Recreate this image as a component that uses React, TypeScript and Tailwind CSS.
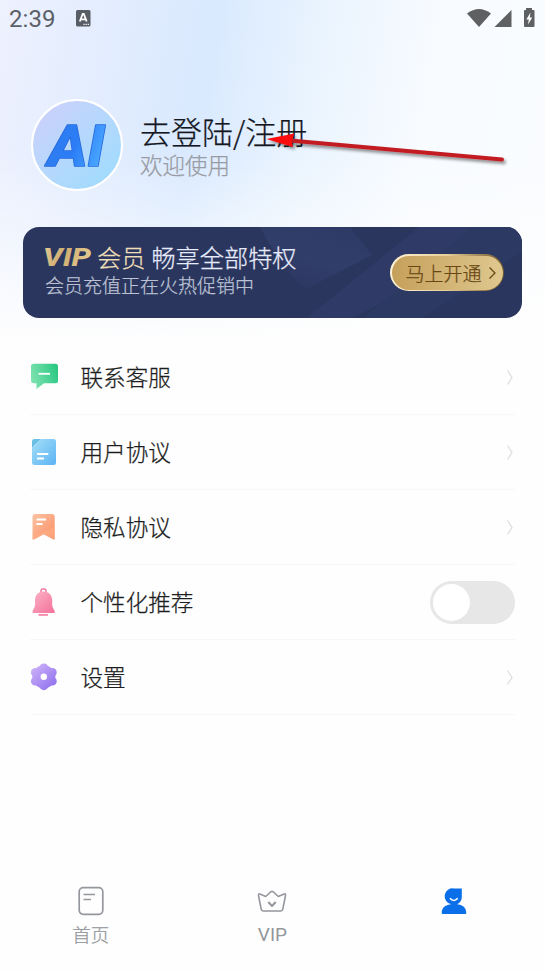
import type { ReactNode } from "react";

interface MenuItem {
  label: string;
  icon: ReactNode;
  toggle?: boolean;
}

const ChatIcon = () => (
  <svg width="30" height="30" viewBox="0 0 30 30">
    <defs>
      <linearGradient id="chat" x1="0" y1="0.6" x2="1" y2="0.3">
        <stop offset="0" stopColor="#7fe3b0" />
        <stop offset="1" stopColor="#2bc883" />
      </linearGradient>
    </defs>
    <path d="M3.500 1.800H25.500A2.500 2.500 0 0 1 28 4.300V18.800A2.500 2.500 0 0 1 25.500 21.300H14L6.500 27V21.300H3.500A2.500 2.500 0 0 1 1 18.800V4.300A2.500 2.500 0 0 1 3.500 1.800Z" fill="url(#chat)" />
    <path d="M8.500 11.800H20" stroke="#fff" strokeWidth="1.800" />
  </svg>
);

const DocIcon = () => (
  <svg width="30" height="30" viewBox="0 0 30 30">
    <defs>
      <linearGradient id="doc" x1="0" y1="0" x2="1" y2="1">
        <stop offset="0" stopColor="#a5dff7" />
        <stop offset="1" stopColor="#5cb3f5" />
      </linearGradient>
    </defs>
    <path d="M2 11V4.500A2.500 2.500 0 0 1 4.500 2H11Z" fill="#6bbfe3" />
    <path d="M10.500 2H23.500A2.500 2.500 0 0 1 26 4.500V25.500A2.500 2.500 0 0 1 23.500 28H4.500A2.500 2.500 0 0 1 2 25.500V10.500L5 8.500Z" fill="url(#doc)" />
    <path d="M7 17H18.300M7 21.500H14" stroke="#fff" strokeWidth="2.100" />
  </svg>
);

const BookmarkIcon = () => (
  <svg width="30" height="30" viewBox="0 0 30 30">
    <defs>
      <linearGradient id="mark" x1="0" y1="0" x2="1" y2="1">
        <stop offset="0" stopColor="#fcc3a3" />
        <stop offset="1" stopColor="#fa8e63" />
      </linearGradient>
    </defs>
    <path d="M4.500 2H22A2.500 2.500 0 0 1 24.700 4.500V26.500Q24.700 28.200 23 27.300L13.700 22.300L4.500 27.300Q2.500 28.200 2.500 26.500V4.500A2.500 2.500 0 0 1 4.500 2Z" fill="url(#mark)" />
    <path d="M2.500 25L24.700 15V26.500Q24.700 28.200 23 27.300L13.700 22.300L4.500 27.300Q2.500 28.200 2.500 26.500Z" fill="#ffb28c" opacity="0.5" />
    <path d="M6.500 7.500H16M6.500 12H12.500" stroke="#fff" strokeWidth="1.900" />
  </svg>
);

const BellIcon = () => (
  <svg width="30" height="30" viewBox="0 0 30 30">
    <defs>
      <linearGradient id="bell" x1="0" y1="0" x2="1" y2="1">
        <stop offset="0" stopColor="#fbb3c6" />
        <stop offset="1" stopColor="#f4709b" />
      </linearGradient>
    </defs>
    <rect x="11" y="2" width="5" height="5" rx="2" fill="none" stroke="#ef7ba0" strokeWidth="1.500" />
    <path d="M13.500 4.600C19 4.600 22.200 8.500 22.200 13.500V18C22.200 21 24.800 22.500 24.800 25.300Q24.800 26 24 26H3.200Q2.400 26 2.400 25.300C2.400 22.500 5 21 5 18V13.500C5 8.500 8 4.600 13.500 4.600Z" fill="url(#bell)" />
    <path d="M8.500 27.900H18" stroke="#f58bab" strokeWidth="1.900" />
  </svg>
);

const GearIcon = () => (
  <svg width="30" height="30" viewBox="0 0 30 30">
    <defs>
      <linearGradient id="gear" gradientUnits="userSpaceOnUse" x1="3" y1="3" x2="25" y2="26">
        <stop offset="0" stopColor="#cdb2f8" />
        <stop offset="1" stopColor="#8f70ee" />
      </linearGradient>
    </defs>
    <g fill="url(#gear)">
      <circle cx="13.800" cy="14.800" r="11.500" />
      <circle cx="13.800" cy="6" r="4.600" />
      <circle cx="13.800" cy="23.600" r="4.600" />
      <circle cx="5.300" cy="10.400" r="4.400" />
      <circle cx="22.300" cy="10.400" r="4.400" />
      <circle cx="5.300" cy="19.200" r="4.400" />
      <circle cx="22.300" cy="19.200" r="4.400" />
    </g>
    <circle cx="13.800" cy="14.800" r="3.200" fill="#fff" />
  </svg>
);

const MENU: MenuItem[] = [
  { label: "联系客服", icon: <ChatIcon /> },
  { label: "用户协议", icon: <DocIcon /> },
  { label: "隐私协议", icon: <BookmarkIcon /> },
  { label: "个性化推荐", icon: <BellIcon />, toggle: true },
  { label: "设置", icon: <GearIcon /> },
];

function StatusBar() {
  return (
    <div className="flex h-9 items-center justify-between pl-[9px] pr-[9px] font-[Roboto,sans-serif] font-normal text-[#5b6068] [-webkit-text-stroke:0]">
      <div className="flex items-center gap-[20px]">
        <span className="pt-[2px] text-[24px] leading-9 tracking-[0.1px]">2:39</span>
        <svg width="15" height="17" viewBox="0 0 15 17">
          <rect width="14.500" height="16.500" rx="1.500" fill="#585d66" />
          <path d="M3.800 11.500L6.700 4H7.800L10.700 11.500M5 9.300H9.500" fill="none" stroke="#fff" strokeWidth="1.800" />
          <path d="M7.500 14.300H13" stroke="#fff" strokeWidth="1.200" strokeDasharray="1.200 0.900" />
        </svg>
      </div>
      <svg width="69" height="22" viewBox="0 0 69 22" fill="#5f6062">
        <path d="M0 6.500Q12 -2.500 24 6.500L12 20Z" />
        <path d="M44.500 3V20H27.500Z" />
        <path d="M59 1H65V3H66.500Q67.500 3 67.500 4V19Q67.500 20 66.500 20H58Q57 20 57 19V4Q57 3 58 3H59Z" />
        <path d="M63.500 5.500L59.300 12.500H61.800L61 17.500L65.300 10.500H62.800Z" fill="#fff" />
      </svg>
    </div>
  );
}

function Profile() {
  return (
    <div className="mt-[63px] flex h-[92px] pl-[31px]">
      <div className="flex size-[92px] items-center justify-center rounded-full border-2 border-white bg-linear-to-br from-[#cfcffa] via-[#b5d8fd] to-[#9adcfd]">
        <svg className="overflow-visible" width="76" height="60" viewBox="0 0 76 60">
          <defs>
            <linearGradient id="ai" x1="0" y1="0" x2="1" y2="0.4">
              <stop offset="0" stopColor="#2f7bea" />
              <stop offset="0.6" stopColor="#2c7df6" />
              <stop offset="1" stopColor="#47a4ff" />
            </linearGradient>
          </defs>
          <text
            x="9"
            y="51"
            textLength="57"
            lengthAdjust="spacingAndGlyphs"
            className="font-[Roboto,sans-serif] text-[58px] font-extrabold italic [paint-order:stroke]"
            fill="url(#ai)"
            stroke="#2468dc"
            strokeWidth="1.600"
            strokeLinejoin="round"
          >
            AI
          </text>
        </svg>
      </div>
      <div className="ml-[17px] flex flex-col pt-[13px]">
        <span className="text-[31px] leading-[38px] text-[#15171f]">去登陆/注册</span>
        <span className="text-[22.500px] leading-[29px] text-[#989ba3]">欢迎使用</span>
      </div>
    </div>
  );
}

function VipCard() {
  return (
    <div className="relative mx-[23px] mt-[36px] flex h-[91px] items-center justify-between overflow-hidden rounded-[16px] bg-[#2a365e] pl-[22px] pr-[18px]">
      <svg className="absolute inset-0" width="499" height="91" viewBox="0 0 499 91">
        <defs>
          <linearGradient id="beam" x1="0.8" y1="0" x2="0.2" y2="1">
            <stop offset="0" stopColor="#2e3a66" />
            <stop offset="0.5" stopColor="#323e6a" />
            <stop offset="1" stopColor="#2b3760" />
          </linearGradient>
        </defs>
        <path d="M237 0H327L349 28L283 62Q262 46 237 0Z" fill="url(#beam)" />
        <path d="M396 0H499L330 91H284Z" fill="#313e69" opacity="0.75" />
        <path d="M450 0H499V25L400 91H340Z" fill="#2c3962" />
      </svg>
      <div className="relative flex flex-col pb-[6px]">
        <div className="flex items-center text-[24.200px] leading-[30px]">
          <svg className="overflow-visible" width="48" height="30" viewBox="0 0 48 30">
            <defs>
              <linearGradient id="gold" x1="0" y1="0" x2="1" y2="0.3">
                <stop offset="0" stopColor="#e6cd99" />
                <stop offset="0.5" stopColor="#cfae72" />
                <stop offset="1" stopColor="#e2c78e" />
              </linearGradient>
            </defs>
            <text
              x="-2"
              y="23.500"
              textLength="48"
              lengthAdjust="spacingAndGlyphs"
              className="font-[Roboto,sans-serif] text-[25px] font-extrabold italic [-webkit-text-stroke:0]"
              fill="url(#gold)"
            >
              VIP
            </text>
          </svg>
          <span className="ml-[4px] text-[#efdfb8]">会员</span>
          <span className="ml-[6px] text-[#e6eafa]">畅享全部特权</span>
        </div>
        <span className="text-[19px] leading-[26px] text-[#bcc2d4]">会员充值正在火热促销中</span>
      </div>
      <button className="relative flex h-[37px] w-[114px] items-center rounded-full bg-linear-to-r from-[#fff3d8] via-[#e7cf98] to-[#72582f] p-[1.500px]">
        <span className="flex h-full w-full items-center rounded-full bg-linear-to-r from-[#c5a05a] to-[#dfc88f] pl-[14px] text-[19px] leading-none text-[#694715]">
          马上开通
          <svg className="ml-[6px]" width="9" height="14" viewBox="0 0 9 14" fill="none" stroke="#694715" strokeWidth="1.300">
            <path d="M1.500 1.500L7 7L1.500 12.500" />
          </svg>
        </span>
      </button>
    </div>
  );
}

function Row({ item }: { item: MenuItem }) {
  return (
    <div className="flex h-[75px] items-center border-b border-[#f7f7f7]">
      {item.icon}
      <span className="ml-[20.500px] flex-1 pb-px text-[22.600px] leading-[30px] text-[#1c1d21]">{item.label}</span>
      {item.toggle ? (
        <span className="flex h-[43px] w-[85px] items-center rounded-full bg-[#e7e7e7] pl-[3px]">
          <span className="size-[37px] rounded-full bg-white" />
        </span>
      ) : (
        <svg className="mr-[1px]" width="8" height="17" viewBox="0 0 8 17" fill="none" stroke="#dedede" strokeWidth="1.300">
          <path d="M1.500 1.500L6 8.500L1.500 15.500" />
        </svg>
      )}
    </div>
  );
}

function TabBar() {
  return (
    <nav className="grid h-[96px] grid-cols-3 text-[#94979c]">
      <div className="flex flex-col items-center pt-[12px]">
        <svg width="28" height="30" viewBox="0 0 28 30" fill="none" stroke="currentColor" strokeWidth="1.700">
          <rect x="2.200" y="1.700" width="23.600" height="26.600" rx="4" />
          <path d="M6.500 8.500H18M6.500 13.500H14" />
        </svg>
        <span className="mt-[4px] text-[18.500px] leading-[28px]">首页</span>
      </div>
      <div className="flex flex-col items-center pt-[12px]">
        <svg width="30" height="30" viewBox="0 0 30 30" fill="none" stroke="currentColor" strokeWidth="1.600" strokeLinejoin="round">
          <path d="M1.500 9.500Q1.500 7 3.500 8.200L8.700 10.500L13.500 6Q15 4.800 16.500 6L21.300 10.500L26.500 8.200Q28.800 7.200 28.500 9.500L25.800 23.200Q25.500 25 23.800 25H6.200Q4.500 25 4.200 23.200Z" />
          <path d="M11.300 16L15 20L18.700 16" strokeWidth="2" />
        </svg>
        <span className="mt-[5px] font-[Roboto,sans-serif] text-[19px] font-normal leading-[28px] [-webkit-text-stroke:0]">VIP</span>
      </div>
      <div className="flex flex-col items-center pt-[13px]">
        <svg width="26" height="28" viewBox="0 0 26 28" fill="#0a6fe8">
          <path d="M13 1.500H20.800V10A7.800 7.800 0 0 1 16 17.300C21 17.500 25.300 20.500 25.300 26Q25.300 27 24.300 27H1.700Q.7 27 .7 26C.7 20.500 5 17.500 10.300 17.300A8 8 0 0 1 13 1.500Z" />
          <path d="M9 11.300Q12.800 15.700 16.700 11.300" fill="none" stroke="#fff" strokeWidth="1.700" />
        </svg>
      </div>
    </nav>
  );
}

// Pointer drawn over the login title
function Arrow() {
  return (
    <svg className="absolute left-[260px] top-[125px]" width="255" height="48" viewBox="0 0 255 48">
      <defs>
        <filter id="shadow" x="-5%" y="-20%" width="112%" height="160%">
          <feDropShadow dx="2" dy="2.500" stdDeviation="1.500" floodColor="#000" floodOpacity="0.45" />
        </filter>
      </defs>
      <g filter="url(#shadow)">
        <path d="M30 15.500L242 34.500" stroke="#c21c22" strokeWidth="3.900" strokeLinecap="round" />
        <path d="M6.500 14L34.500 8.500L31.500 15.500L33 22Z" fill="#fb0808" />
      </g>
    </svg>
  );
}

export default function App() {
  return (
    <div className="relative flex h-[970px] w-[545px] flex-col overflow-hidden bg-[#fefefe] font-['Noto_Sans_CJK_SC',sans-serif] font-light [-webkit-text-stroke:0.25px]">
      <header className="h-[340px] bg-[linear-gradient(180deg,transparent_45%,#fefefe_100%),linear-gradient(100deg,#eef1fe_0%,#e3edfe_18%,#d9e9fe_36%,#eaf4fe_54%,#f8fbff_74%,#fafcff_100%)]">
        <StatusBar />
        <Profile />
        <VipCard />
      </header>
      <main className="flex-1 pl-[30px] pr-[30px]">
        {MENU.map((item) => (
          <Row key={item.label} item={item} />
        ))}
      </main>
      <TabBar />
      <Arrow />
    </div>
  );
}
